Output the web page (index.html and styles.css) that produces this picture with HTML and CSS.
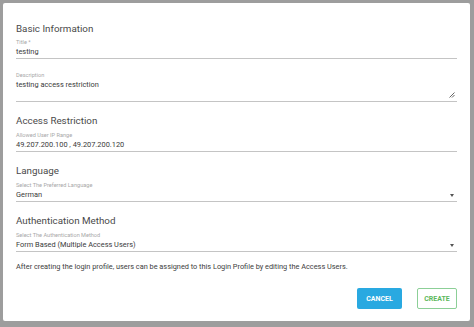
FILE: index.html
```html
<!DOCTYPE html>
<html>
<head>
<meta charset="utf-8">
<link rel="stylesheet" href="styles.css">
</head>
<body>
<div class="dialog">
  <div class="section">
    <div class="section-title">Basic Information</div>
    <div class="field">
      <div class="field-label">Title *</div>
      <div class="field-input">testing</div>
    </div>
    <div class="field field-gap">
      <div class="field-label">Description</div>
      <div class="field-input field-textarea">testing access restriction
        <svg class="grip" width="7" height="7" viewBox="0 0 7 7"><path d="M6.5 1.5 L1.5 6.5 M6.5 4 L4 6.5" stroke="#555" stroke-width="0.9" fill="none"/></svg>
      </div>
    </div>
  </div>

  <div class="section">
    <div class="section-title">Access Restriction</div>
    <div class="field">
      <div class="field-label">Allowed User IP Range</div>
      <div class="field-input">49.207.200.100 , 49.207.200.120</div>
    </div>
  </div>

  <div class="section">
    <div class="section-title">Language</div>
    <div class="field">
      <div class="field-label">Select The Preferred Language</div>
      <div class="field-input field-select">German<span class="caret"></span></div>
    </div>
  </div>

  <div class="section">
    <div class="section-title">Authentication Method</div>
    <div class="field">
      <div class="field-label">Select The Authentication Method</div>
      <div class="field-input field-select">Form Based (Multiple Access Users)<span class="caret"></span></div>
    </div>
  </div>

  <p class="note">After creating the login profile, users can be assigned to this Login Profile by editing the Access Users.</p>

  <div class="actions">
    <button class="btn btn-cancel">CANCEL</button>
    <button class="btn btn-create">CREATE</button>
  </div>
</div>
</body>
</html>
```

FILE: styles.css
```css
html, body {
  margin: 0;
  padding: 0;
  height: 100%;
}
body {
  background: #9d9d9d;
  font-family: Roboto, "Liberation Sans", sans-serif;
  padding: 3px 4px 0 3px;
  box-sizing: border-box;
}
.dialog {
  background: #fff;
  width: 467px;
  height: 318px;
  box-sizing: border-box;
  padding: 20px 13px 10px 13px;
  border-radius: 2px;
  display: flex;
  flex-direction: column;
}
.section + .section {
  margin-top: 13px;
}
.section + .section .field {
  margin-top: 3px;
}
.section-title {
  font-size: 9.8px;
  line-height: 12px;
  color: #4a4a4a;
}
.field {
  margin-top: 2px;
}
.section .field-gap {
  margin-top: 11px;
}
.field-label {
  font-size: 5.6px;
  line-height: 10px;
  color: #a8a8a8;
}
.field-input {
  position: relative;
  font-size: 7.4px;
  line-height: 10px;
  color: #3a3a3a;
  padding-bottom: 1px;
  border-bottom: 1px solid #c4c4c4;
}
.field-textarea {
  height: 13px;
  padding-bottom: 8px;
}
.grip {
  position: absolute;
  right: 2px;
  bottom: 3px;
}
.caret {
  position: absolute;
  right: 3px;
  top: 4px;
  width: 0;
  height: 0;
  border-left: 2.5px solid transparent;
  border-right: 2.5px solid transparent;
  border-top: 3px solid #555;
}
.note {
  margin: 10px 0 0 0;
  font-size: 7.35px;
  line-height: 10px;
  color: #3d3d3d;
}
.actions {
  margin-top: 16px;
  display: flex;
  justify-content: flex-end;
  gap: 15px;
}
.btn {
  height: 21px;
  font-family: Roboto, "Liberation Sans", sans-serif;
  font-size: 7px;
  font-weight: 700;
  border-radius: 2px;
  padding: 0;
  cursor: pointer;
}
.btn-cancel {
  width: 45px;
  background: #29a9e1;
  color: #fff;
  border: none;
}
.btn-create {
  width: 40px;
  background: #fff;
  color: #5cb85c;
  border: 1px solid #8ccf97;
}
```
